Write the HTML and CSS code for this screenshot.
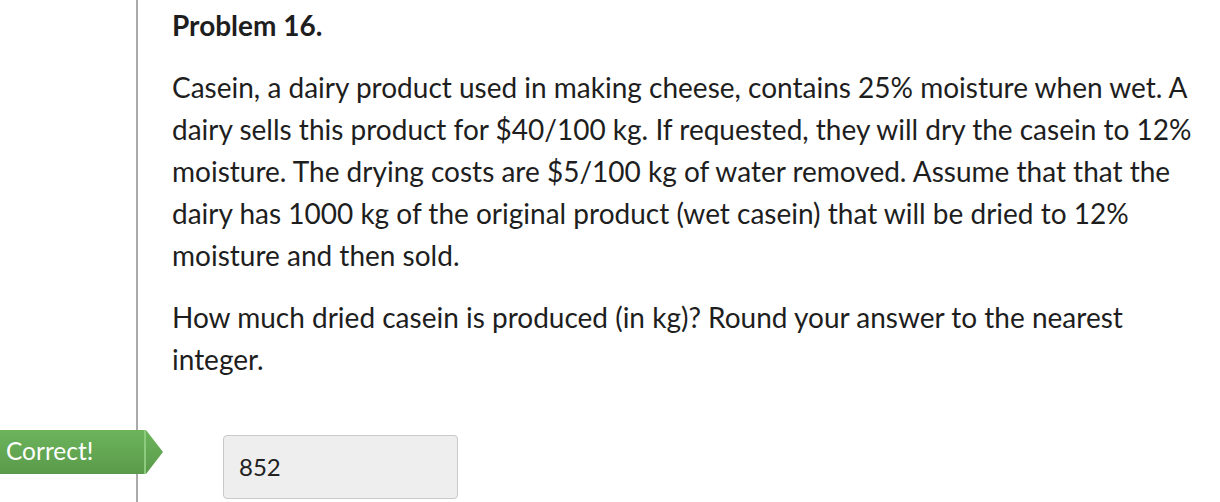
FILE: index.html
```html
<!DOCTYPE html>
<html>
<head>
<meta charset="utf-8">
<link rel="stylesheet" href="styles.css">
</head>
<body>
<div class="page">
  <div class="gutter"></div>
  <div class="question">
    <h2 class="title">Problem 16.</h2>
    <p class="text">Casein, a dairy product used in making cheese, contains 25% moisture when wet. A dairy sells this product for $40/100 kg. If requested, they will dry the casein to 12% moisture. The drying costs are $5/100 kg of water removed. Assume that that the dairy has 1000 kg of the original product (wet casein) that will be dried to 12% moisture and then sold.</p>
    <p class="text">How much dried casein is produced (in kg)? Round your answer to the nearest integer.</p>
    <div class="answer-row">
      <div class="answer-box">852</div>
    </div>
  </div>
  <div class="badge"><span class="badge-label">Correct!</span><span class="badge-tip"></span></div>
</div>
</body>
</html>
```
FILE: styles.css
```css
html, body {
  margin: 0;
  padding: 0;
  background: #fff;
}
body {
  font-family: Lato, "Noto Sans", sans-serif;
  color: #1e1e1e;
  width: 1220px;
  height: 502px;
  overflow: hidden;
}
.page {
  position: relative;
  display: flex;
  height: 502px;
}
.gutter {
  width: 136px;
  flex: none;
  border-right: 2px solid #aaaaaa;
}
.question {
  padding-left: 34px;
  padding-top: 4px;
  width: 1020px;
}
.title {
  margin: 0;
  font-size: 28px;
  line-height: 42px;
  font-weight: 700;
}
.text {
  margin: 20px 0 0;
  font-size: 28px;
  line-height: 42px;
  font-weight: 400;
}
.answer-row {
  padding-top: 55px;
  padding-left: 51px;
}
.answer-box {
  box-sizing: border-box;
  width: 235px;
  height: 64px;
  background: #eeeeee;
  border: 1px solid #c9c9c9;
  border-radius: 4px;
  padding-left: 15px;
  font-size: 24px;
  line-height: 62px;
  color: #222;
}
.badge {
  position: absolute;
  left: 0;
  top: 430px;
  display: flex;
  height: 44px;
}
.badge-label {
  width: 146px;
  box-sizing: border-box;
  padding-left: 6px;
  background: linear-gradient(#6cb45c, #5a9a4a);
  border-right: 2px solid #8ccb7e;
  color: #fff;
  font-size: 24.5px;
  line-height: 42px;
}
.badge-tip {
  width: 17px;
  height: 44px;
  background: linear-gradient(#6cb45c, #5a9a4a);
  clip-path: polygon(0 0, 100% 50%, 0 100%);
}
```
